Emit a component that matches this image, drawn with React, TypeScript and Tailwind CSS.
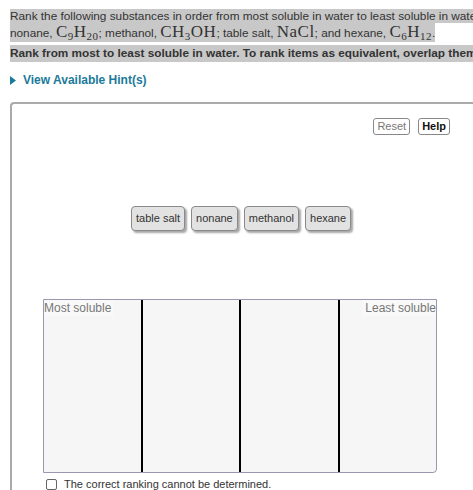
const serif = "font-['Liberation_Serif',serif] text-[17px] tracking-[0.5px]";

function Formula({ parts }: { parts: [string, string][] }) {
  return (
    <span className={serif}>
      {parts.map(([el, n], i) => (
        <span key={i}>
          {el}
          {n ? <span className="relative top-[3px] text-[11px]">{n}</span> : null}
        </span>
      ))}
    </span>
  );
}

function Chip({ label }: { label: string }) {
  return (
    <div className="rounded-[4px] border border-[#8a8a8a] bg-[#e2e2e2] px-[4px] py-[4px] text-[11px] leading-[15px] text-[#333] shadow-[2px_2px_2px_rgba(0,0,0,0.35)]">
      {label}
    </div>
  );
}

export default function App() {
  const items = ["table salt", "nonane", "methanol", "hexane"];
  return (
    <div className="h-[490px] w-[473px] overflow-hidden bg-white pl-[10px] pt-[9px] font-['Liberation_Sans',Arial,sans-serif] text-[11.8px] text-[#333]">
      <div className="whitespace-nowrap">
        <div className="w-fit bg-[#c8c8c8] leading-[14px]">
          Rank the following substances in order from most soluble in water to least soluble in water:
        </div>
        <div className="w-fit bg-[#c8c8c8] leading-[17px]">
          nonane, <Formula parts={[["C", "9"], ["H", "20"]]} />; methanol,{" "}
          <Formula parts={[["CH", "3"], ["OH", ""]]} />; table salt, <span className={serif}>NaCl</span>; and hexane,{" "}
          <Formula parts={[["C", "6"], ["H", "12"]]} />.
        </div>
        <div className="mt-[3px] w-fit bg-[#c8c8c8] font-bold leading-[17px]">
          Rank from most to least soluble in water. To rank items as equivalent, overlap them.
        </div>
      </div>

      <div className="mt-[11px] flex items-center gap-[7px] text-[12px] font-bold leading-[14px] text-[#1a7a9a]">
        <svg width="6" height="9" viewBox="0 0 6 9">
          <path d="M0 0 L6 4.5 L0 9 Z" fill="#1a7a9a" />
        </svg>
        View Available Hint(s)
      </div>

      <div className="mt-[15px] w-[480px] rounded-tl-[4px] border-l-2 border-t-2 border-[#aaa] pb-10">
        <div className="flex justify-end gap-[8px] pr-[40px] pt-[14px]">
          <button className="rounded-[3px] border border-[#888] bg-white px-[3px] text-[11px] leading-[15px] text-[#777]">
            Reset
          </button>
          <button className="rounded-[3px] border border-[#888] bg-white px-[3px] text-[11px] font-bold leading-[15px] text-[#111]">
            Help
          </button>
        </div>

        <div className="ml-[119px] mt-[71px] flex gap-[6px]">
          {items.map((it) => (
            <Chip key={it} label={it} />
          ))}
        </div>

        <div className="ml-[31px] mt-[68px] flex h-[174px] w-[394px] overflow-hidden rounded-br-[4px] border border-[#9a98ae] bg-[#f6f6f6]">
          <div className="relative flex-1 border-r-2 border-black">
            <span className="absolute left-0 top-0 bg-[#f9f9f9] pr-[2px] text-[12px] leading-[16px] text-[#777]">
              Most soluble
            </span>
          </div>
          <div className="flex-1 border-r-2 border-black" />
          <div className="flex-1 border-r-2 border-black" />
          <div className="relative flex-1">
            <span className="absolute right-0 top-0 bg-[#f9f9f9] pl-[2px] text-[12px] leading-[16px] text-[#777]">
              Least soluble
            </span>
          </div>
        </div>

        <label className="ml-[34px] mt-[3px] flex items-center gap-[7px] text-[11px] text-[#333]">
          <span className="inline-block h-[11px] w-[11px] rounded-[2px] border border-[#666] bg-white" />
          The correct ranking cannot be determined.
        </label>
      </div>
    </div>
  );
}
